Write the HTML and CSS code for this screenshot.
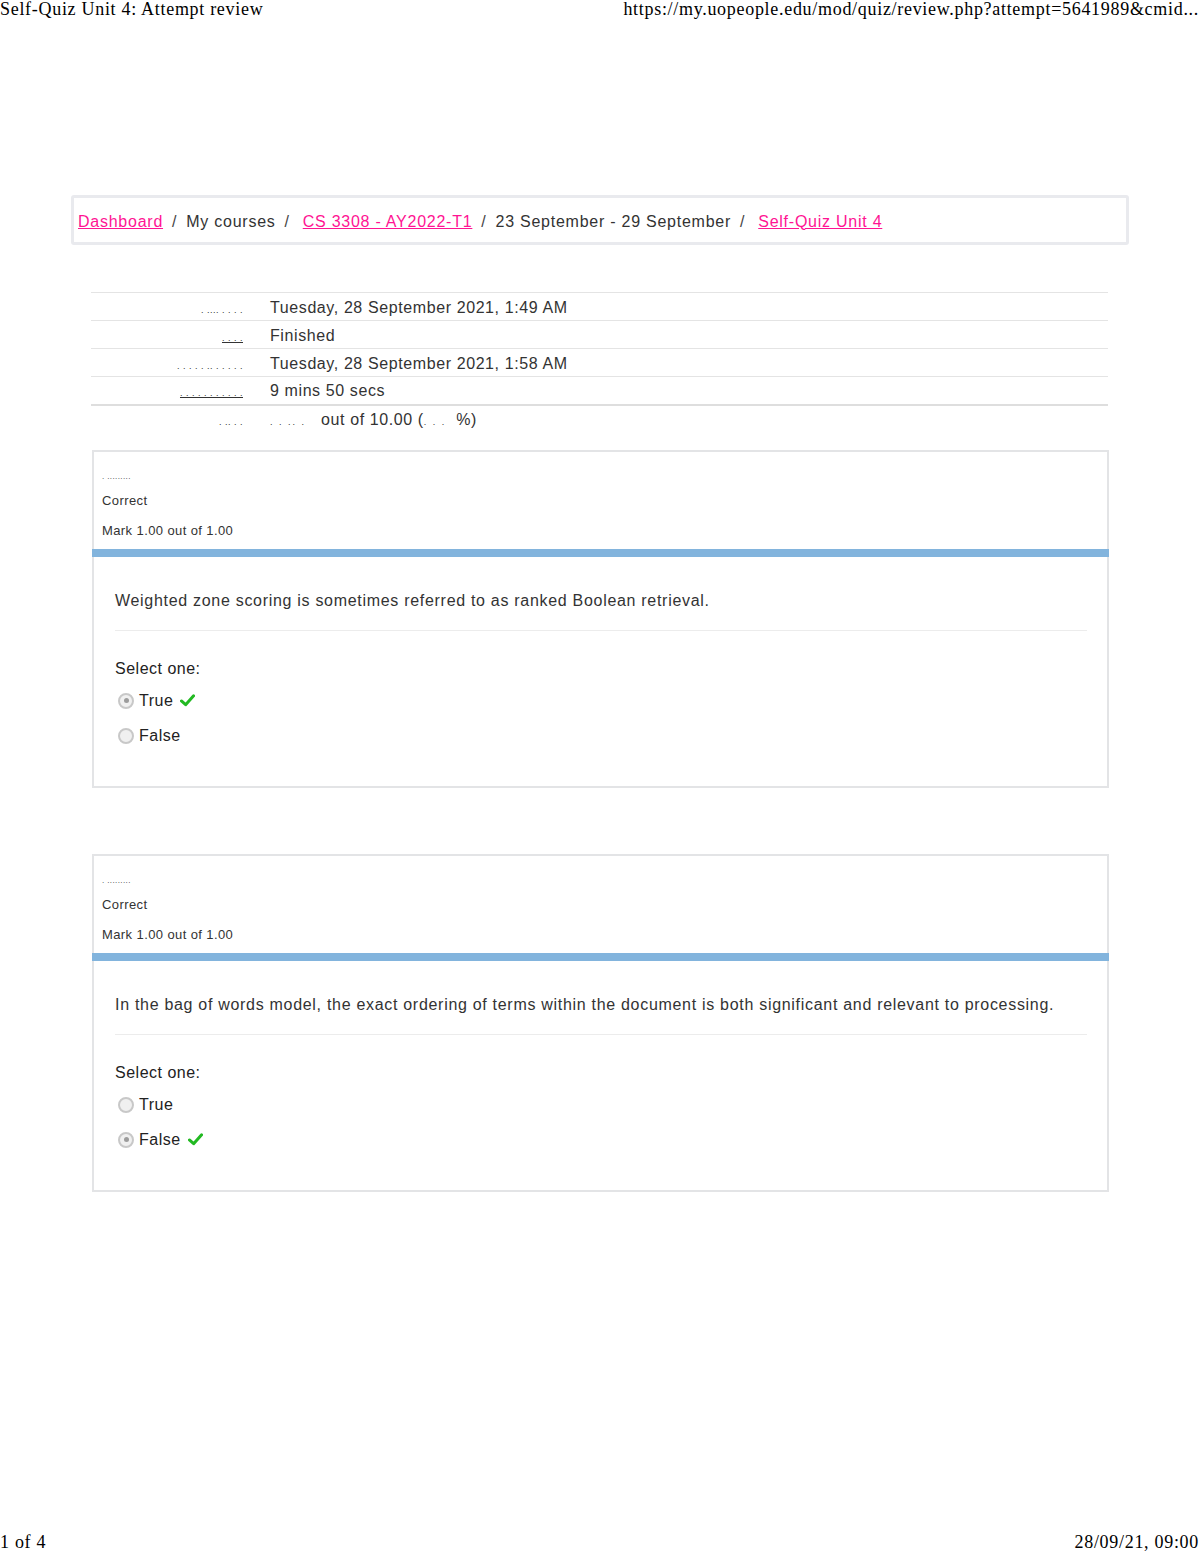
FILE: index.html
```html
<!DOCTYPE html>
<html lang="en">
<head>
<meta charset="utf-8">
<title>Self-Quiz Unit 4: Attempt review</title>
<link rel="stylesheet" href="styles.css">
</head>
<body>
<div class="page">
  <header class="print-head">
    <span>Self-Quiz Unit 4: Attempt review</span>
    <span>https://my.uopeople.edu/mod/quiz/review.php?attempt=5641989&amp;cmid...</span>
  </header>

  <main class="content">
    <nav class="breadcrumb">
      <a href="#">Dashboard</a><span class="sep">/</span>
      <span>My courses</span><span class="sep">/</span>
      <a href="#">CS 3308 - AY2022-T1</a><span class="sep">/</span>
      <span>23 September - 29 September</span><span class="sep">/</span>
      <a href="#">Self-Quiz Unit 4</a>
    </nav>

    <table class="summary">
      <tr><th><span class="dots">. .... . . . .</span></th><td>Tuesday, 28 September 2021, 1:49 AM</td></tr>
      <tr><th><span class="dots ul">. . . .</span></th><td>Finished</td></tr>
      <tr><th><span class="dots">. . . . . .. . . . . .</span></th><td>Tuesday, 28 September 2021, 1:58 AM</td></tr>
      <tr><th><span class="dots ul">. . . . . . . . . . .</span></th><td>9 mins 50 secs</td></tr>
      <tr class="grade"><th><span class="dots">. .. . .</span></th><td><span class="dots wide">. . .. .</span> out of 10.00 (<span class="dots wide">. . .</span>%)</td></tr>
    </table>

    <section class="que">
      <div class="info">
        <div class="qno">. .........</div>
        <div class="state">Correct</div>
        <div class="grade-line">Mark 1.00 out of 1.00</div>
      </div>
      <div class="formulation">
        <p class="qtext">Weighted zone scoring is sometimes referred to as ranked Boolean retrieval.</p>
        <div class="ablock">
          <div class="prompt">Select one:</div>
          <div class="opt"><span class="radio checked"></span><span>True</span><svg class="tick" viewBox="0 0 16 16" width="15" height="15"><path d="M1.5 8.5 L6 12.5 L14.5 3" fill="none" stroke="#22b922" stroke-width="3.2" stroke-linecap="round" stroke-linejoin="round"/></svg></div>
          <div class="opt"><span class="radio"></span><span>False</span></div>
        </div>
      </div>
    </section>

    <section class="que">
      <div class="info">
        <div class="qno">. .........</div>
        <div class="state">Correct</div>
        <div class="grade-line">Mark 1.00 out of 1.00</div>
      </div>
      <div class="formulation">
        <p class="qtext">In the bag of words model, the exact ordering of terms within the document is both significant and relevant to processing.</p>
        <div class="ablock">
          <div class="prompt">Select one:</div>
          <div class="opt"><span class="radio"></span><span>True</span></div>
          <div class="opt"><span class="radio checked"></span><span>False</span><svg class="tick" viewBox="0 0 16 16" width="15" height="15"><path d="M1.5 8.5 L6 12.5 L14.5 3" fill="none" stroke="#22b922" stroke-width="3.2" stroke-linecap="round" stroke-linejoin="round"/></svg></div>
        </div>
      </div>
    </section>
  </main>

  <footer class="print-foot">
    <span>1 of 4</span>
    <span>28/09/21, 09:00</span>
  </footer>
</div>
</body>
</html>
```

FILE: styles.css
```css
* { box-sizing: border-box; }
html, body { margin: 0; padding: 0; background: #fff; }
.page {
  width: 1200px;
  height: 1553px;
  display: flex;
  flex-direction: column;
  font-family: "Liberation Sans", Arial, sans-serif;
  color: #2b2b2b;
}
.print-head, .print-foot {
  display: flex;
  justify-content: space-between;
  font-family: "Liberation Serif", "Times New Roman", serif;
  font-size: 18px;
  line-height: 18px;
  color: #000;
  letter-spacing: 0.7px;
}
.print-head { height: 18px; padding-right: 1px; }
.print-foot { margin-top: auto; height: 20px; padding-bottom: 2px; padding-right: 1px; }
.content { padding: 177px 71px 0 71px; }

.breadcrumb {
  height: 50px;
  border: 3px solid #e9eaee;
  border-radius: 3px;
  display: flex;
  align-items: center;
  padding: 3px 5px 0 4px;
  font-size: 16px;
  letter-spacing: 0.75px;
  color: #333;
}
.breadcrumb a { color: #ff1493; text-decoration: underline; }
.breadcrumb .sep { margin: 0 9px 0 9px; color: #444; }
.breadcrumb .sep + a { margin-left: 4px; }

.summary {
  margin: 47px 20px 0 20px;
  width: 1017px;
  border-collapse: collapse;
  font-size: 16px;
  letter-spacing: 0.6px;
}
.summary tr { border-top: 1px solid #e4e4e4; }
.summary tr.grade { border-top: 2px solid #dedede; }
.summary th, .summary td { height: 28px; padding: 2px 0 0 0; vertical-align: middle; }
.summary th {
  width: 179px;
  text-align: right;
  padding-right: 27px;
  font-weight: normal;
}
.summary td { color: #333; }
.dots { font-size: 9px; color: #333; letter-spacing: 0.5px; }
.dots.wide { letter-spacing: 2px; margin-right: 10px; }
.dots.ul { text-decoration: underline; }

.que {
  margin: 17px 20px 0 21px;
  border: 2px solid #e3e4e6;
  background: #fff;
}
.que + .que { margin-top: 66px; }
.info {
  height: 97px;
  padding: 18px 8px 0 8px;
  font-size: 13px;
  letter-spacing: 0.4px;
  color: #333;
}
.qno { height: 14px; font-size: 8px; line-height: 14px; }
.state { margin-top: 9px; line-height: 16px; }
.grade-line { margin-top: 14px; line-height: 16px; }
.formulation {
  border-top: 8px solid #82b4dd;
  margin: 0 -2px;
  padding: 34px 22px 0 23px;
  height: 237px;
}
.qtext {
  margin: 0;
  font-size: 16px;
  letter-spacing: 0.7px;
  line-height: 20px;
  padding-bottom: 19px;
  border-bottom: 1px solid #ececec;
  color: #333;
}
.ablock { padding-top: 28px; font-size: 16px; letter-spacing: 0.5px; color: #222; }
.prompt { line-height: 20px; margin-bottom: 12px; }
.opt { display: flex; align-items: center; gap: 5px; height: 20px; margin-bottom: 15px; padding-left: 3px; }
.radio {
  width: 16px; height: 16px;
  border-radius: 50%;
  border: 2.5px solid #c8c8c8;
  background: #f0f0f0;
  display: inline-flex;
  align-items: center;
  justify-content: center;
}
.radio.checked::after {
  content: "";
  width: 5px; height: 5px;
  border-radius: 50%;
  background: #9c9c9c;
}
.tick { margin-left: 2px; }
```
